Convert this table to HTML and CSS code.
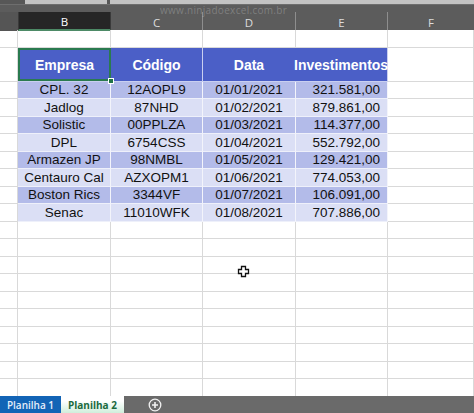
FILE: index.html
```html
<!DOCTYPE html>
<html lang="pt-BR">
<head>
<meta charset="utf-8">
<title>Planilha</title>
<link rel="stylesheet" href="styles.css">
</head>
<body>
<div class="app">
  <div class="topbar">
    <span class="seg dark w25"></span><span class="seg light w82"></span><span class="seg dark w3"></span><span class="seg light fill"></span>
  </div>
  <div class="strip"></div>
  <div class="row colhead">
    <div class="ch corner"></div>
    <div class="ch selcol">B</div>
    <div class="ch">C</div>
    <div class="ch">D</div>
    <div class="ch">E</div>
    <div class="ch last">F</div>
  </div>
  <div class="watermark">www.ninjadoexcel.com.br</div>

  <div class="sheet">
    <div class="row r"><div class="c"></div><div class="c"></div><div class="c"></div><div class="c"></div><div class="c"></div><div class="c"></div></div>

    <div class="row thead">
      <div class="c"></div>
      <div class="c th selcell">Empresa<span class="handle"></span></div>
      <div class="c th">Código</div>
      <div class="c th">Data</div>
      <div class="c th ov">Investimentos</div>
      <div class="c"></div>
    </div>

    <div class="row r odd"><div class="c"></div><div class="c t">CPL. 32</div><div class="c t">12AOPL9</div><div class="c t">01/01/2021</div><div class="c t num">321.581,00</div><div class="c"></div></div>
    <div class="row r even"><div class="c"></div><div class="c t">Jadlog</div><div class="c t">87NHD</div><div class="c t">01/02/2021</div><div class="c t num">879.861,00</div><div class="c"></div></div>
    <div class="row r odd"><div class="c"></div><div class="c t">Solistic</div><div class="c t">00PPLZA</div><div class="c t">01/03/2021</div><div class="c t num">114.377,00</div><div class="c"></div></div>
    <div class="row r even"><div class="c"></div><div class="c t">DPL</div><div class="c t">6754CSS</div><div class="c t">01/04/2021</div><div class="c t num">552.792,00</div><div class="c"></div></div>
    <div class="row r odd"><div class="c"></div><div class="c t">Armazen JP</div><div class="c t">98NMBL</div><div class="c t">01/05/2021</div><div class="c t num">129.421,00</div><div class="c"></div></div>
    <div class="row r even"><div class="c"></div><div class="c t">Centauro Cal</div><div class="c t">AZXOPM1</div><div class="c t">01/06/2021</div><div class="c t num">774.053,00</div><div class="c"></div></div>
    <div class="row r odd"><div class="c"></div><div class="c t">Boston Rics</div><div class="c t">3344VF</div><div class="c t">01/07/2021</div><div class="c t num">106.091,00</div><div class="c"></div></div>
    <div class="row r even"><div class="c"></div><div class="c t">Senac</div><div class="c t">11010WFK</div><div class="c t">01/08/2021</div><div class="c t num">707.886,00</div><div class="c"></div></div>

    <div class="row r"><div class="c"></div><div class="c"></div><div class="c"></div><div class="c"></div><div class="c"></div><div class="c"></div></div>
    <div class="row r"><div class="c"></div><div class="c"></div><div class="c"></div><div class="c"></div><div class="c"></div><div class="c"></div></div>
    <div class="row r"><div class="c"></div><div class="c"></div><div class="c"></div><div class="c"></div><div class="c"></div><div class="c"></div></div>
    <div class="row r"><div class="c"></div><div class="c"></div><div class="c"></div><div class="c"></div><div class="c"></div><div class="c"></div></div>
    <div class="row r"><div class="c"></div><div class="c"></div><div class="c"></div><div class="c"></div><div class="c"></div><div class="c"></div></div>
    <div class="row r"><div class="c"></div><div class="c"></div><div class="c"></div><div class="c"></div><div class="c"></div><div class="c"></div></div>
    <div class="row r"><div class="c"></div><div class="c"></div><div class="c"></div><div class="c"></div><div class="c"></div><div class="c"></div></div>
    <div class="row r"><div class="c"></div><div class="c"></div><div class="c"></div><div class="c"></div><div class="c"></div><div class="c"></div></div>
    <div class="row r"><div class="c"></div><div class="c"></div><div class="c"></div><div class="c"></div><div class="c"></div><div class="c"></div></div>
    <div class="row r"><div class="c"></div><div class="c"></div><div class="c"></div><div class="c"></div><div class="c"></div><div class="c"></div></div>
  </div>

  <div class="tabs">
    <div class="tab tab1">Planilha 1</div>
    <div class="tab tab2">Planilha 2</div>
    <div class="tabrest">
      <svg class="addsheet" width="14" height="14" viewBox="0 0 14 14">
        <circle cx="7" cy="7" r="5.8" fill="none" stroke="#f0f0f0" stroke-width="1.3"/>
        <path d="M7 4v6M4 7h6" stroke="#f0f0f0" stroke-width="1.6"/>
      </svg>
    </div>
  </div>

  <svg class="cursor" width="13" height="13" viewBox="0 0 13 13">
    <path d="M4.5 1.5h4v3h3v4h-3v3h-4v-3h-3v-4h3z" fill="#fff" stroke="#111" stroke-width="1.3" stroke-linejoin="miter"/>
  </svg>
</div>
</body>
</html>
```

FILE: styles.css
```css
* { box-sizing: border-box; }
html, body { margin: 0; padding: 0; }
body {
  width: 474px;
  height: 413px;
  overflow: hidden;
  background: #fff;
  font-family: "Liberation Sans", Arial, sans-serif;
}
.app {
  position: relative;
  width: 474px;
  height: 413px;
  display: flex;
  flex-direction: column;
  overflow: hidden;
}
.topbar {
  height: 4px;
  display: flex;
  flex: none;
}
.seg { display: block; height: 100%; }
.seg.dark { background: #575757; }
.seg.light { background: #c3c3c3; }
.w25 { width: 25px; }
.w82 { width: 82px; }
.w3 { width: 3px; }
.fill { flex: 1; }
.strip {
  height: 8px;
  flex: none;
  background: #5c5c5c;
  border-top: 1px solid #6e6e6e;
}
.row {
  display: grid;
  grid-template-columns: 18px 93px 92px 93px 92px 1fr;
  flex: none;
}
.colhead {
  height: 18px;
  background: #5c5c5c;
}
.ch {
  font-family: "Open Sans", "Noto Sans", sans-serif;
  font-size: 11.5px;
  color: #dcdcdc;
  display: flex;
  align-items: center;
  justify-content: center;
  border-right: 1px solid #8e8e8e;
  padding-top: 2px;
}
.ch.corner { background: #555; border-right: none; }
.ch.last { border-right: none; }
.ch.selcol {
  background: #262626;
  color: #fff;
  border-right: 1px solid #3a3a3a;
  border-bottom: 2px solid #4d8a66;
  border-left: 1px solid #3a3a3a;
}
.watermark {
  position: absolute;
  left: 160px;
  top: 4px;
  font-family: "Open Sans", "Noto Sans", sans-serif;
  font-size: 10px;
  line-height: 12px;
  letter-spacing: 0.3px;
  color: rgba(255, 255, 255, 0.22);
  white-space: nowrap;
}
.sheet {
  flex: 1;
  display: flex;
  flex-direction: column;
  overflow: hidden;
}
.r { height: 17.5px; }
.thead { height: 34px; }
.c {
  border-right: 1px solid #d9d9d9;
  border-bottom: 1px solid #d9d9d9;
  overflow: visible;
  white-space: nowrap;
}
.t {
  display: flex;
  align-items: center;
  justify-content: center;
  font-size: 13.5px;
  color: #111;
  border-right: 1px solid #f3f4fb;
  border-bottom: 1px solid #eef0fa;
}
.odd .t { background: #b3bbe9; }
.even .t { background: #dbdff5; }
.t.num { justify-content: flex-end; padding-right: 7px; }
.th {
  position: relative;
  display: flex;
  align-items: center;
  justify-content: center;
  background: #4b5fc7;
  color: #fff;
  font-weight: bold;
  font-size: 14px;
  border-right: 1px solid #c9cff0;
  border-bottom: 1px solid #c9cff0;
  padding-top: 1px;
}
.th.ov { justify-content: flex-start; padding-left: 0; margin-left: -2px; overflow: visible; }
.selcell {
  box-shadow: inset 0 0 0 2px #2a7a4f;
  border-right: none;
}
.handle {
  position: absolute;
  right: -3px;
  bottom: -3px;
  width: 6px;
  height: 6px;
  background: #217346;
  border: 1px solid #fff;
  z-index: 2;
}
.tabs {
  height: 17px;
  flex: none;
  display: flex;
  background: #6a6a6a;
  font-family: "Open Sans", "Noto Sans", sans-serif;
  font-size: 10px;
}
.tab {
  display: flex;
  align-items: center;
  justify-content: center;
  font-weight: 600;
}
.tab1 {
  width: 61px;
  background: #1264b6;
  color: #e6eefa;
}
.tab2 {
  width: 63px;
  background: linear-gradient(#ffffff 30%, #cfeedb);
  color: #1b6a3e;
  font-weight: 700;
}
.tabrest {
  flex: 1;
  display: flex;
  align-items: center;
  padding-left: 24px;
}
.addsheet { display: block; }
.cursor {
  position: absolute;
  left: 237px;
  top: 265px;
}
```
